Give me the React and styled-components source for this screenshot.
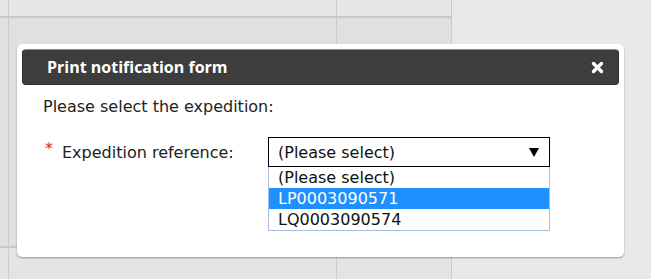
import React from 'react'
import styled, { createGlobalStyle } from 'styled-components'

const GlobalStyle = createGlobalStyle`
  html, body {
    margin: 0;
    padding: 0;
    background: #e8e8e8;
  }
`

const options = ['(Please select)', 'LP0003090571', 'LQ0003090574']

export default function App() {
  return (
    <Page>
      <GlobalStyle />
      <Backdrop>
        <Table>
          <Cell $row={0} />
          <Cell $row={0} />
          <Cell $row={0} />
          <Cell $row={1} />
          <Cell $row={1} />
          <Cell $row={1} />
          <Cell $row={2} />
          <Cell $row={2} />
          <Cell $row={2} />
        </Table>
        <Side />
      </Backdrop>

      <Dialog>
        <Header>
          <Title>Print notification form</Title>
          <CloseIcon width="13" height="13" viewBox="0 0 13 13">
            <path d="M2.5 2.5 L10.5 10.5 M10.5 2.5 L2.5 10.5" stroke="#fff" strokeWidth="3.4" strokeLinecap="round" />
          </CloseIcon>
        </Header>
        <Body>
          <Intro>Please select the expedition:</Intro>
          <FieldRow>
            <Required>*</Required>
            <Label>Expedition reference:</Label>
            <SelectWrap>
              <SelectBox>
                <span>(Please select)</span>
                <svg width="10" height="9" viewBox="0 0 10 9">
                  <polygon points="0,0 10,0 5,9" fill="#000" />
                </svg>
              </SelectBox>
              <DropList>
                {options.map((o, i) => (
                  <Option key={o} $selected={i === 1}>{o}</Option>
                ))}
              </DropList>
            </SelectWrap>
          </FieldRow>
        </Body>
      </Dialog>
    </Page>
  )
}

const Page = styled.div`
  position: relative;
  width: 651px;
  height: 279px;
  overflow: hidden;
  font-family: 'DejaVu Sans', Verdana, sans-serif;
`

const Backdrop = styled.div`
  display: flex;
  height: 100%;
`

const Table = styled.div`
  display: grid;
  grid-template-columns: 9px 328px 115px;
  grid-template-rows: 18px 230px 1fr;
  width: 452px;
`

const Cell = styled.div`
  background: ${(p) => (p.$row === 0 ? '#e6e6e6' : p.$row === 1 ? '#e0e0e0' : '#e4e4e4')};
  border-right: 1px solid #cbcbcb;
  border-bottom: ${(p) => (p.$row === 2 ? 'none' : '2px solid #c8c8c8')};
`

const Side = styled.div`
  flex: 1;
  background: #e9e9e9;
`

const Dialog = styled.div`
  position: absolute;
  left: 17px;
  top: 44px;
  width: 607px;
  height: 213px;
  box-sizing: border-box;
  padding: 5px;
  background: #fff;
  border-radius: 5px;
  box-shadow: 0 1px 2px rgba(0, 0, 0, 0.35);
`

const Header = styled.div`
  display: flex;
  align-items: center;
  justify-content: space-between;
  height: 36px;
  box-sizing: border-box;
  padding: 0 14px 0 24px;
  background: #3d3d3d;
  border: 1px solid #2e2e2e;
  border-top-color: #8c8c8c;
  border-radius: 4px;
`

const Title = styled.span`
  color: #fff;
  font-family: 'Open Sans', sans-serif;
  font-weight: 700;
  font-size: 16px;
`

const CloseIcon = styled.svg`
  display: block;
`

const Body = styled.div`
  padding: 12px 0 0 21px;
`

const Intro = styled.div`
  font-size: 16px;
  line-height: 20px;
  color: #222;
`

const FieldRow = styled.div`
  display: flex;
  align-items: center;
  margin-top: 20px;
`

const Required = styled.span`
  width: 17px;
  margin: 3px 0 0 2px;
  align-self: flex-start;
  color: #d9262b;
  font-size: 16px;
  line-height: 18px;
`

const Label = styled.span`
  width: 206px;
  font-size: 16px;
  color: #222;
`

const SelectWrap = styled.div`
  position: relative;
  width: 282px;
`

const SelectBox = styled.div`
  display: flex;
  align-items: center;
  justify-content: space-between;
  height: 30px;
  box-sizing: border-box;
  padding: 0 10px 0 9px;
  border: 1px solid #000;
  font-size: 16px;
  color: #111;
`

const DropList = styled.div`
  position: absolute;
  top: 100%;
  left: 0;
  right: 0;
  background: #fff;
  border: 1px solid #a9bde2;
  border-top: none;
`

const Option = styled.div`
  height: 21px;
  line-height: 21px;
  padding-left: 9px;
  font-size: 16px;
  background: ${(p) => (p.$selected ? '#1e90ff' : '#fff')};
  color: ${(p) => (p.$selected ? '#fff' : '#111')};
`
